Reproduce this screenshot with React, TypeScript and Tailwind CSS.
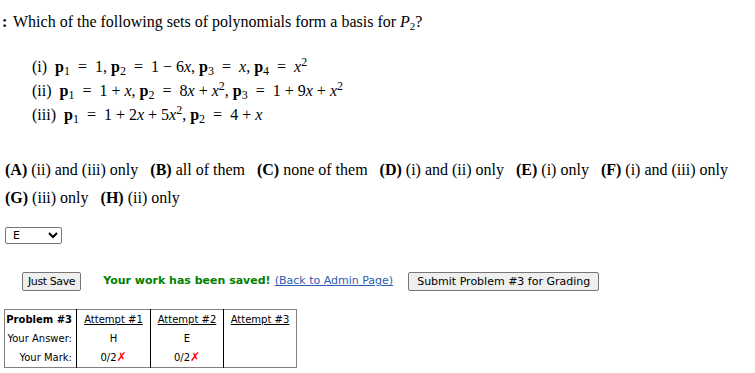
import React from 'react';

const serif = { fontFamily: '"Liberation Serif", "Times New Roman", serif' };

function P({ n }: { n: number }) {
  return (
    <span>
      <b>p</b>
      <sub className="text-[12px]">{n}</sub>
    </span>
  );
}

function X() {
  return <i>x</i>;
}

function Sq() {
  return (
    <span>
      <i>x</i>
      <sup className="text-[12px]">2</sup>
    </span>
  );
}

const choices: [string, string][] = [
  ['(A)', '(ii) and (iii) only'],
  ['(B)', 'all of them'],
  ['(C)', 'none of them'],
  ['(D)', '(i) and (ii) only'],
  ['(E)', '(i) only'],
  ['(F)', '(i) and (iii) only'],
  ['(G)', '(iii) only'],
  ['(H)', '(ii) only'],
];

export default function App() {
  return (
    <div className="w-[755px] h-[373px] bg-white text-black overflow-hidden">
      <div style={serif} className="text-[16px] leading-[20px]">
        <div className="flex items-baseline pt-[12px]">
          <b className="w-[13px] pl-[2px]">:</b>
          <span>
            Which of the following sets of polynomials form a basis for <i>P</i>
            <sub className="text-[11px]">2</sub>?
          </span>
        </div>

        <div className="pl-[32px] pt-[23px] text-[16px] leading-[24px] flex flex-col">
          <div>
            (i)&nbsp; <P n={1} /> &nbsp;=&nbsp; 1, <P n={2} /> &nbsp;=&nbsp; 1 − 6<X />, <P n={3} /> &nbsp;=&nbsp; <X />,{' '}
            <P n={4} /> &nbsp;=&nbsp; <Sq />
          </div>
          <div>
            (ii)&nbsp; <P n={1} /> &nbsp;=&nbsp; 1 + <X />, <P n={2} /> &nbsp;=&nbsp; 8<X /> + <Sq />, <P n={3} />{' '}
            &nbsp;=&nbsp; 1 + 9<X /> + <Sq />
          </div>
          <div>
            (iii)&nbsp; <P n={1} /> &nbsp;=&nbsp; 1 + 2<X /> + 5<Sq />, <P n={2} /> &nbsp;=&nbsp; 4 + <X />
          </div>
        </div>

        <div className="pl-[5px] pt-[29px] flex flex-wrap gap-x-[12px] w-[740px] leading-[28px]">
          {choices.map(([k, v]) => (
            <span key={k} className="whitespace-nowrap">
              <b>{k}</b> {v}
            </span>
          ))}
        </div>
      </div>

      <div style={{ fontFamily: '"DejaVu Sans", Verdana, sans-serif' }} className="text-[11px]">
        <div className="pl-[5px] pt-[15px] h-[32px]">
          <select
            defaultValue="E"
            className="w-[57px] h-[17px] border border-[#767676] rounded-[2px] text-[11px] pl-[3px] bg-white"
          >
            <option>A</option>
            <option>B</option>
            <option>C</option>
            <option>D</option>
            <option>E</option>
            <option>F</option>
            <option>G</option>
            <option>H</option>
          </select>
        </div>

        <div className="flex items-center pl-[22px] pt-[28px]">
          <button className="h-[19px] px-[5px] bg-[#efefef] border border-[#767676] rounded-[2px] text-[11px] leading-none tracking-[-0.4px]">
            Just Save
          </button>
          <span className="ml-[22px] font-bold text-[#008000]">Your work has been saved!</span>
          <a href="#" className="ml-[4px] text-[#2a5db0] underline">
            (Back to Admin Page)
          </a>
          <button className="ml-[15px] h-[19px] px-[8px] bg-[#efefef] border border-[#767676] rounded-[2px] text-[11px] leading-none">
            Submit Problem #3 for Grading
          </button>
        </div>

        <div className="pl-[4px] pt-[18px]">
          <table className="table-fixed w-[292px] border border-[#808080] border-collapse text-[10px] leading-[19px] whitespace-nowrap">
            <tbody>
              <tr>
                <th className="w-[72px] text-right pr-[4px] border-r border-black">Problem #3</th>
                <td className="w-[74px] text-center border-r border-black underline">Attempt #1</td>
                <td className="w-[73px] text-center border-r border-black underline">Attempt #2</td>
                <td className="w-[73px] text-center underline">Attempt #3</td>
              </tr>
              <tr>
                <td className="text-right pr-[4px] border-r border-black">Your Answer:</td>
                <td className="text-center border-r border-black">H</td>
                <td className="text-center border-r border-black">E</td>
                <td></td>
              </tr>
              <tr>
                <td className="text-right pr-[4px] border-r border-black">Your Mark:</td>
                <td className="text-center border-r border-black">
                  0/2<span className="text-[#ff0000] text-[12px]">✗</span>
                </td>
                <td className="text-center border-r border-black">
                  0/2<span className="text-[#ff0000] text-[12px]">✗</span>
                </td>
                <td></td>
              </tr>
            </tbody>
          </table>
        </div>
      </div>
    </div>
  );
}
